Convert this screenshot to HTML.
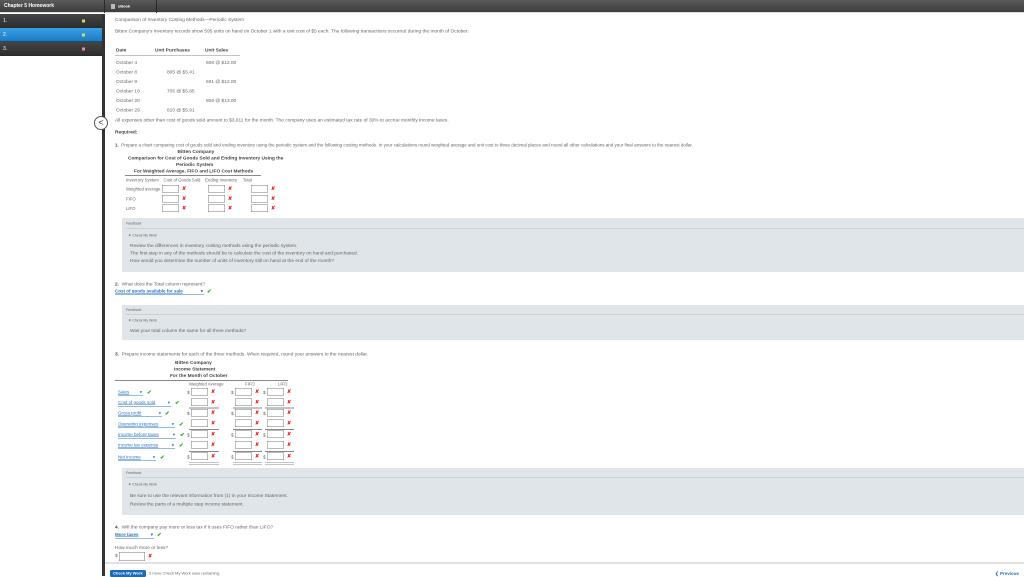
<!DOCTYPE html>
<html><head><meta charset="utf-8"><style>
*{margin:0;padding:0;box-sizing:border-box}
html,body{width:1024px;height:576px;overflow:hidden;background:#fff}
#w{position:absolute;left:0;top:0;width:2048px;height:1152px;transform:scale(.5);transform-origin:0 0;font-family:"Liberation Sans",sans-serif;color:#666;font-size:9.6px}
.a{position:absolute;white-space:nowrap}
.b{font-weight:bold;color:#444}
.top{position:absolute;left:0;top:0;width:2048px;height:26px;background:linear-gradient(#5a5a5a,#3c3c3c);border-bottom:2px solid #ddd}
.side{position:absolute;left:0;top:28px;width:204px;height:84px}
.it{height:28px;background:linear-gradient(#444,#2e2e2e);border-bottom:1px solid #222;color:#fff;font-size:10px;padding:8px 0 0 6px;position:relative}
.it i{position:absolute;left:164px;top:11px;width:6px;height:6px}
.bar{position:absolute;left:204px;top:28px;width:6px;height:1124px;background:#333}
.inp{position:absolute;width:34px;height:15px;border:1px solid #777;background:#fff}
.x{position:absolute;color:#e22;font-weight:bold;font-size:10px}
.ck{position:absolute;color:#3a3;font-size:11px;font-weight:bold}
.sel{position:absolute;color:#2a74c0;text-decoration:underline;font-size:9px;border-bottom:1px solid #2a74c0;white-space:nowrap;overflow:hidden;height:13px}
.sel span{position:absolute;right:2px;top:0;text-decoration:none}
.fb{position:absolute;left:244px;width:1804px;background:#dfe5e9}
.hl{position:absolute;height:2px;background:#888}
</style></head><body><div id="w">
<div class="top"></div>
<div class="a" style="left:8px;top:6px;color:#fff;font-weight:bold;font-size:10px">Chapter 5 Homework</div>
<div style="position:absolute;left:208px;top:0;width:2px;height:26px;background:#2a2a2a"></div>
<div style="position:absolute;left:222px;top:8px;width:8px;height:10px;background:#bbb"></div>
<div class="a" style="left:236px;top:8px;color:#fff;font-size:8px;font-weight:bold">eBook</div>
<div style="position:absolute;left:312px;top:0;width:2px;height:26px;background:#2a2a2a"></div>
<div class="side">
<div class="it">1.<i style="background:#cd6"></i></div>
<div class="it" style="background:linear-gradient(#3aa0e6,#1a78c2)">2.<i style="background:#cd6"></i></div>
<div class="it">3.<i style="background:#e8a"></i></div>
</div>
<div class="bar"></div>
<div style="position:absolute;left:188px;top:232px;width:28px;height:28px;border-radius:50%;border:2px solid #555;background:#fff;font-size:18px;line-height:22px;text-align:center;color:#333">&lt;</div>

<div class="a" style="left:230px;top:34px">Comparison of Inventory Costing Methods—Periodic System</div>
<div class="a" style="left:230px;top:57px">Bitten Company's inventory records show 595 units on hand on October 1 with a unit cost of $5 each. The following transactions occurred during the month of October:</div>
<div class="a b" style="left:232px;top:95px">Date</div>
<div class="a b" style="left:310px;top:95px">Unit Purchases</div>
<div class="a b" style="left:410px;top:95px">Unit Sales</div>
<div class="hl" style="left:230px;top:111px;width:250px;height:1px"></div>
<div class="a" style="left:232px;top:120px">October 4</div><div class="a" style="left:412px;top:120px">508 @ $12.00</div>
<div class="a" style="left:232px;top:139px">October 8</div><div class="a" style="left:334px;top:139px">805 @ $5.41</div>
<div class="a" style="left:232px;top:158px">October 9</div><div class="a" style="left:412px;top:158px">691 @ $12.00</div>
<div class="a" style="left:232px;top:177px">October 18</div><div class="a" style="left:334px;top:177px">705 @ $5.85</div>
<div class="a" style="left:232px;top:196px">October 20</div><div class="a" style="left:412px;top:196px">806 @ $13.00</div>
<div class="a" style="left:232px;top:215px">October 29</div><div class="a" style="left:334px;top:215px">810 @ $5.91</div>
<div class="a" style="left:230px;top:235px">All expenses other than cost of goods sold amount to $3,011 for the month. The company uses an estimated tax rate of 30% to accrue monthly income taxes.</div>
<div class="a b" style="left:230px;top:259px">Required:</div>
<div class="a" style="left:230px;top:285px;font-size:9px"><b style="color:#444">1.</b>&nbsp; Prepare a chart comparing cost of goods sold and ending inventory using the periodic system and the following costing methods. In your calculations round weighted average and unit cost to three decimal places and round all other calculations and your final answers to the nearest dollar.</div>
<div class="a b" style="left:355px;top:298px">Bitten Company</div>
<div class="a b" style="left:256px;top:311px">Comparison for Cost of Goods Sold and Ending Inventory Using the</div>
<div class="a b" style="left:352px;top:324px">Periodic System</div>
<div class="a b" style="left:268px;top:337px">For Weighted Average, FIFO and LIFO Cost Methods</div>
<div class="hl" style="left:250px;top:350px;width:272px"></div>
<div class="a" style="left:252px;top:355px;font-size:8.5px">Inventory System&nbsp;&nbsp;&nbsp; Cost of Goods Sold&nbsp;&nbsp;&nbsp; Ending Inventory&nbsp;&nbsp;&nbsp;&nbsp; Total</div>
<div class="a" style="left:252px;top:373px;font-size:8.5px">Weighted average</div>
<div class="a" style="left:252px;top:393px;font-size:8.5px">FIFO</div>
<div class="a" style="left:252px;top:412px;font-size:8.5px">LIFO</div>
<div class="inp" style="left:324px;top:370px"></div><div class="inp" style="left:324px;top:390px"></div><div class="inp" style="left:324px;top:409px"></div>
<div class="inp" style="left:416px;top:370px"></div><div class="inp" style="left:416px;top:390px"></div><div class="inp" style="left:416px;top:409px"></div>
<div class="inp" style="left:502px;top:370px"></div><div class="inp" style="left:502px;top:390px"></div><div class="inp" style="left:502px;top:409px"></div>
<div class="x" style="left:364px;top:372px">✘</div><div class="x" style="left:364px;top:392px">✘</div><div class="x" style="left:364px;top:411px">✘</div>
<div class="x" style="left:456px;top:372px">✘</div><div class="x" style="left:456px;top:392px">✘</div><div class="x" style="left:456px;top:411px">✘</div>
<div class="x" style="left:542px;top:372px">✘</div><div class="x" style="left:542px;top:392px">✘</div><div class="x" style="left:542px;top:411px">✘</div>

<div class="fb" style="top:436px;height:108px"></div>
<div class="a" style="left:252px;top:444px;font-size:7px">Feedback</div>
<div style="position:absolute;left:252px;top:456px;width:1796px;height:1px;background:#bbb"></div>
<div class="a" style="left:256px;top:468px;font-size:7px">▼ Check My Work</div>
<div class="a" style="left:260px;top:486px">Review the differences in inventory costing methods using the periodic system.</div>
<div class="a" style="left:260px;top:501px">The first step in any of the methods should be to calculate the cost of the inventory on hand and purchased.</div>
<div class="a" style="left:260px;top:516px">How would you determine the number of units of inventory still on hand at the end of the month?</div>

<div class="a" style="left:230px;top:563px"><b style="color:#444">2.</b>&nbsp; What does the Total column represent?</div>
<div class="sel" style="left:230px;top:577px;width:178px;font-weight:bold">Cost of goods available for sale<span>▾</span></div>
<div class="ck" style="left:414px;top:576px">✔</div>
<div class="fb" style="top:610px;height:70px"></div>
<div class="a" style="left:252px;top:617px;font-size:7px">Feedback</div>
<div style="position:absolute;left:252px;top:628px;width:1796px;height:1px;background:#bbb"></div>
<div class="a" style="left:256px;top:638px;font-size:7px">▼ Check My Work</div>
<div class="a" style="left:260px;top:656px">Was your total column the same for all three methods?</div>

<div class="a" style="left:230px;top:703px"><b style="color:#444">3.</b>&nbsp; Prepare income statements for each of the three methods. When required, round your answers to the nearest dollar.</div>
<div class="a b" style="left:350px;top:720px">Bitten Company</div>
<div class="a b" style="left:348px;top:733px">Income Statement</div>
<div class="a b" style="left:340px;top:746px">For the Month of October</div>
<div class="hl" style="left:230px;top:760px;width:346px"></div>
<div class="a" style="left:378px;top:763px;font-size:8.5px">Weighted Average</div>
<div class="a" style="left:490px;top:763px;font-size:8.5px">FIFO</div>
<div class="a" style="left:556px;top:763px;font-size:8.5px">LIFO</div>
<div class="sel" style="left:236px;top:779px;width:50px">Sales<span>▾</span></div><div class="ck" style="left:294px;top:778px">✔</div>
<div class="sel" style="left:236px;top:800px;width:106px">Cost of goods sold<span>▾</span></div><div class="ck" style="left:350px;top:799px">✔</div>
<div class="sel" style="left:236px;top:821px;width:88px">Gross profit<span>▾</span></div><div class="ck" style="left:330px;top:820px">✔</div>
<div class="sel" style="left:236px;top:843px;width:114px">Operating expenses<span>▾</span></div><div class="ck" style="left:358px;top:842px">✔</div>
<div class="sel" style="left:236px;top:864px;width:116px">Income before taxes<span>▾</span></div><div class="ck" style="left:360px;top:863px">✔</div>
<div class="sel" style="left:236px;top:885px;width:114px">Income tax expense<span>▾</span></div><div class="ck" style="left:358px;top:884px">✔</div>
<div class="sel" style="left:236px;top:909px;width:76px">Net income<span>▾</span></div><div class="ck" style="left:320px;top:908px">✔</div>
<div class="a" style="left:374px;top:780px">$</div><div class="a" style="left:374px;top:822px">$</div><div class="a" style="left:374px;top:865px">$</div><div class="a" style="left:374px;top:909px">$</div>
<div class="a" style="left:462px;top:780px">$</div><div class="a" style="left:462px;top:822px">$</div><div class="a" style="left:462px;top:865px">$</div><div class="a" style="left:462px;top:909px">$</div>
<div class="a" style="left:526px;top:780px">$</div><div class="a" style="left:526px;top:822px">$</div><div class="a" style="left:526px;top:865px">$</div><div class="a" style="left:526px;top:909px">$</div>
<div class="inp" style="left:382px;top:776px"></div><div class="inp" style="left:382px;top:797px"></div><div class="inp" style="left:382px;top:818px"></div><div class="inp" style="left:382px;top:839px"></div><div class="inp" style="left:382px;top:861px"></div><div class="inp" style="left:382px;top:882px"></div><div class="inp" style="left:382px;top:905px"></div>
<div class="inp" style="left:470px;top:776px"></div><div class="inp" style="left:470px;top:797px"></div><div class="inp" style="left:470px;top:818px"></div><div class="inp" style="left:470px;top:839px"></div><div class="inp" style="left:470px;top:861px"></div><div class="inp" style="left:470px;top:882px"></div><div class="inp" style="left:470px;top:905px"></div>
<div class="inp" style="left:534px;top:776px"></div><div class="inp" style="left:534px;top:797px"></div><div class="inp" style="left:534px;top:818px"></div><div class="inp" style="left:534px;top:839px"></div><div class="inp" style="left:534px;top:861px"></div><div class="inp" style="left:534px;top:882px"></div><div class="inp" style="left:534px;top:905px"></div>
<div class="x" style="left:422px;top:778px">✘</div><div class="x" style="left:422px;top:799px">✘</div><div class="x" style="left:422px;top:820px">✘</div><div class="x" style="left:422px;top:841px">✘</div><div class="x" style="left:422px;top:863px">✘</div><div class="x" style="left:422px;top:884px">✘</div><div class="x" style="left:422px;top:907px">✘</div>
<div class="x" style="left:510px;top:778px">✘</div><div class="x" style="left:510px;top:799px">✘</div><div class="x" style="left:510px;top:820px">✘</div><div class="x" style="left:510px;top:841px">✘</div><div class="x" style="left:510px;top:863px">✘</div><div class="x" style="left:510px;top:884px">✘</div><div class="x" style="left:510px;top:907px">✘</div>
<div class="x" style="left:574px;top:778px">✘</div><div class="x" style="left:574px;top:799px">✘</div><div class="x" style="left:574px;top:820px">✘</div><div class="x" style="left:574px;top:841px">✘</div><div class="x" style="left:574px;top:863px">✘</div><div class="x" style="left:574px;top:884px">✘</div><div class="x" style="left:574px;top:907px">✘</div>
<div class="hl" style="left:378px;top:815px;width:60px"></div><div class="hl" style="left:466px;top:815px;width:58px"></div><div class="hl" style="left:530px;top:815px;width:58px"></div>
<div class="hl" style="left:378px;top:858px;width:60px"></div><div class="hl" style="left:466px;top:858px;width:58px"></div><div class="hl" style="left:530px;top:858px;width:58px"></div>
<div class="hl" style="left:378px;top:902px;width:60px"></div><div class="hl" style="left:466px;top:902px;width:58px"></div><div class="hl" style="left:530px;top:902px;width:58px"></div>
<div class="hl" style="left:378px;top:925px;width:60px;height:4px;border-top:1px solid #888;border-bottom:1px solid #888;background:none"></div><div class="hl" style="left:466px;top:925px;width:58px;height:4px;border-top:1px solid #888;border-bottom:1px solid #888;background:none"></div><div class="hl" style="left:530px;top:925px;width:58px;height:4px;border-top:1px solid #888;border-bottom:1px solid #888;background:none"></div>

<div class="fb" style="top:936px;height:94px"></div>
<div class="a" style="left:252px;top:943px;font-size:7px">Feedback</div>
<div style="position:absolute;left:252px;top:955px;width:1796px;height:1px;background:#bbb"></div>
<div class="a" style="left:256px;top:966px;font-size:7px">▼ Check My Work</div>
<div class="a" style="left:260px;top:986px">Be sure to use the relevant information from (1) in your Income Statement.</div>
<div class="a" style="left:260px;top:1003px">Review the parts of a multiple step income statement.</div>

<div class="a" style="left:230px;top:1049px"><b style="color:#444">4.</b>&nbsp; Will the company pay more or less tax if it uses FIFO rather than LIFO?</div>
<div class="sel" style="left:230px;top:1064px;width:78px;font-weight:bold">More taxes<span>▾</span></div><div class="ck" style="left:314px;top:1063px">✔</div>
<div class="a" style="left:230px;top:1090px">How much more or less?</div>
<div class="a" style="left:230px;top:1106px">$</div>
<div class="inp" style="left:238px;top:1104px;width:52px;height:18px"></div>
<div class="x" style="left:296px;top:1107px">✘</div>
<div style="position:absolute;left:210px;top:1124px;width:1838px;height:4px;background:#e2e2e2"></div>
<div style="position:absolute;left:220px;top:1140px;width:72px;height:14px;background:#1a6cb8;border-radius:3px"></div>
<div class="a" style="left:226px;top:1142px;color:#fff;font-size:8px;font-weight:bold">Check My Work</div>
<div class="a" style="left:298px;top:1142px;font-size:8px">3 more Check My Work uses remaining.</div>
<div class="a" style="left:1990px;top:1142px;color:#2a74c0;font-size:9px;font-weight:bold">❮ Previous</div>
</div></body></html>
